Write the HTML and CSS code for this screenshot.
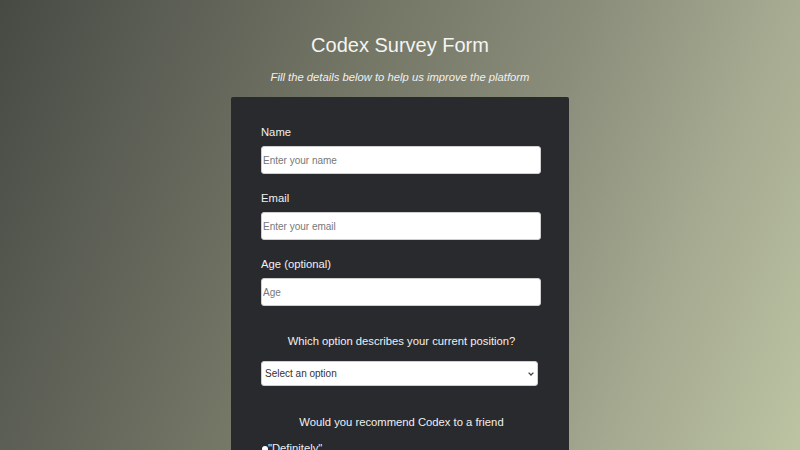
FILE: index.html
```html
<!DOCTYPE html>
<html lang="en">
<head>
<meta charset="utf-8">
<title>Codex Survey Form</title>
<link rel="stylesheet" href="styles.css">
</head>
<body>
<header class="head">
  <h1 class="title" id="title">Codex Survey Form</h1>
  <p class="desc" id="description">Fill the details below to help us improve the platform</p>
</header>
<form class="card" id="survey-form">
  <div class="field">
    <label class="label" for="name">Name</label>
    <input class="input" id="name" type="text" placeholder="Enter your name">
  </div>
  <div class="field">
    <label class="label" for="email">Email</label>
    <input class="input" id="email" type="email" placeholder="Enter your email">
  </div>
  <div class="field">
    <label class="label" for="number">Age (optional)</label>
    <input class="input" id="number" type="number" placeholder="Age">
  </div>
  <div class="field center">
    <p class="question">Which option describes your current position?</p>
    <div class="select-wrap">
      <select class="select" id="dropdown">
        <option>Select an option</option>
      </select>
      <svg class="chev" width="6" height="4" viewBox="0 0 6 4" aria-hidden="true"><path d="M0.6 0.6 L3 3 L5.4 0.6" fill="none" stroke="#444" stroke-width="1.3"/></svg>
    </div>
  </div>
  <div class="field center">
    <p class="question q2">Would you recommend Codex to a friend</p>
    <label class="radio"><span class="dot"></span>"Definitely"</label>
    <label class="radio"><span class="dot"></span>"Maybe"</label>
  </div>
</form>
</body>
</html>
```
FILE: styles.css
```css
html, body {
  margin: 0;
  padding: 0;
}
body {
  min-height: 450px;
  font-family: "Liberation Sans", Arial, sans-serif;
  color: #eeeeee;
  background: linear-gradient(111deg, #474a43 0%, #5c5f55 18%, #5f6157 20.5%, #737565 38.5%, #8a8d7a 61%, #a5a990 80%, #bcc4a3 100%);
  background-attachment: fixed;
}
.head {
  display: flex;
  flex-direction: column;
  align-items: center;
  padding-top: 33px;
}
.title {
  margin: 0;
  font-size: 20px;
  font-weight: 400;
  line-height: 24px;
  color: #f4f4f4;
}
.desc {
  margin: 13px 0 0;
  font-size: 11.25px;
  font-style: italic;
  line-height: 15px;
  color: #f0f0f0;
}
.card {
  width: 338px;
  box-sizing: border-box;
  margin: 12px auto 0;
  padding: 28px 27px 20px 30px;
  background: #292a2d;
  border-radius: 2px;
  display: flex;
  flex-direction: column;
  gap: 17px;
}
.field {
  display: flex;
  flex-direction: column;
}
.label {
  font-size: 11.25px;
  line-height: 15px;
  margin-bottom: 6px;
  color: #f0f0f0;
}
.input {
  box-sizing: border-box;
  width: 280px;
  height: 28px;
  margin: 0;
  padding: 0 1px;
  border: 1px solid #cfcfcf;
  border-radius: 3px;
  background: #ffffff;
  font-family: "Liberation Sans", Arial, sans-serif;
  font-size: 10px;
  color: #222;
  outline: none;
}
.input::placeholder {
  color: #777;
}
.center {
  align-items: flex-start;
}
.question {
  align-self: stretch;
  text-align: center;
  margin: 11px 0 12px;
  font-size: 11.25px;
  line-height: 15px;
  color: #f0f0f0;
}
.q2 {
  margin-top: 12px;
  margin-bottom: 11px;
}
.select-wrap {
  position: relative;
  width: 277px;
  height: 25px;
}
.select {
  -webkit-appearance: none;
  appearance: none;
  box-sizing: border-box;
  width: 277px;
  height: 25px;
  margin: 0;
  padding: 0 3px;
  border: 1px solid #cfcfcf;
  border-radius: 3px;
  background: #ffffff;
  font-family: "Liberation Sans", Arial, sans-serif;
  font-size: 10px;
  color: #333;
  outline: none;
}
.chev {
  position: absolute;
  right: 4px;
  top: 11px;
  pointer-events: none;
}
.radio {
  display: flex;
  align-items: center;
  font-size: 11.25px;
  line-height: 15px;
  color: #f0f0f0;
  margin-bottom: 6px;
}
.dot {
  width: 6px;
  height: 6px;
  margin: 0 0 0 1px;
  border-radius: 50%;
  background: #ffffff;
}
```
